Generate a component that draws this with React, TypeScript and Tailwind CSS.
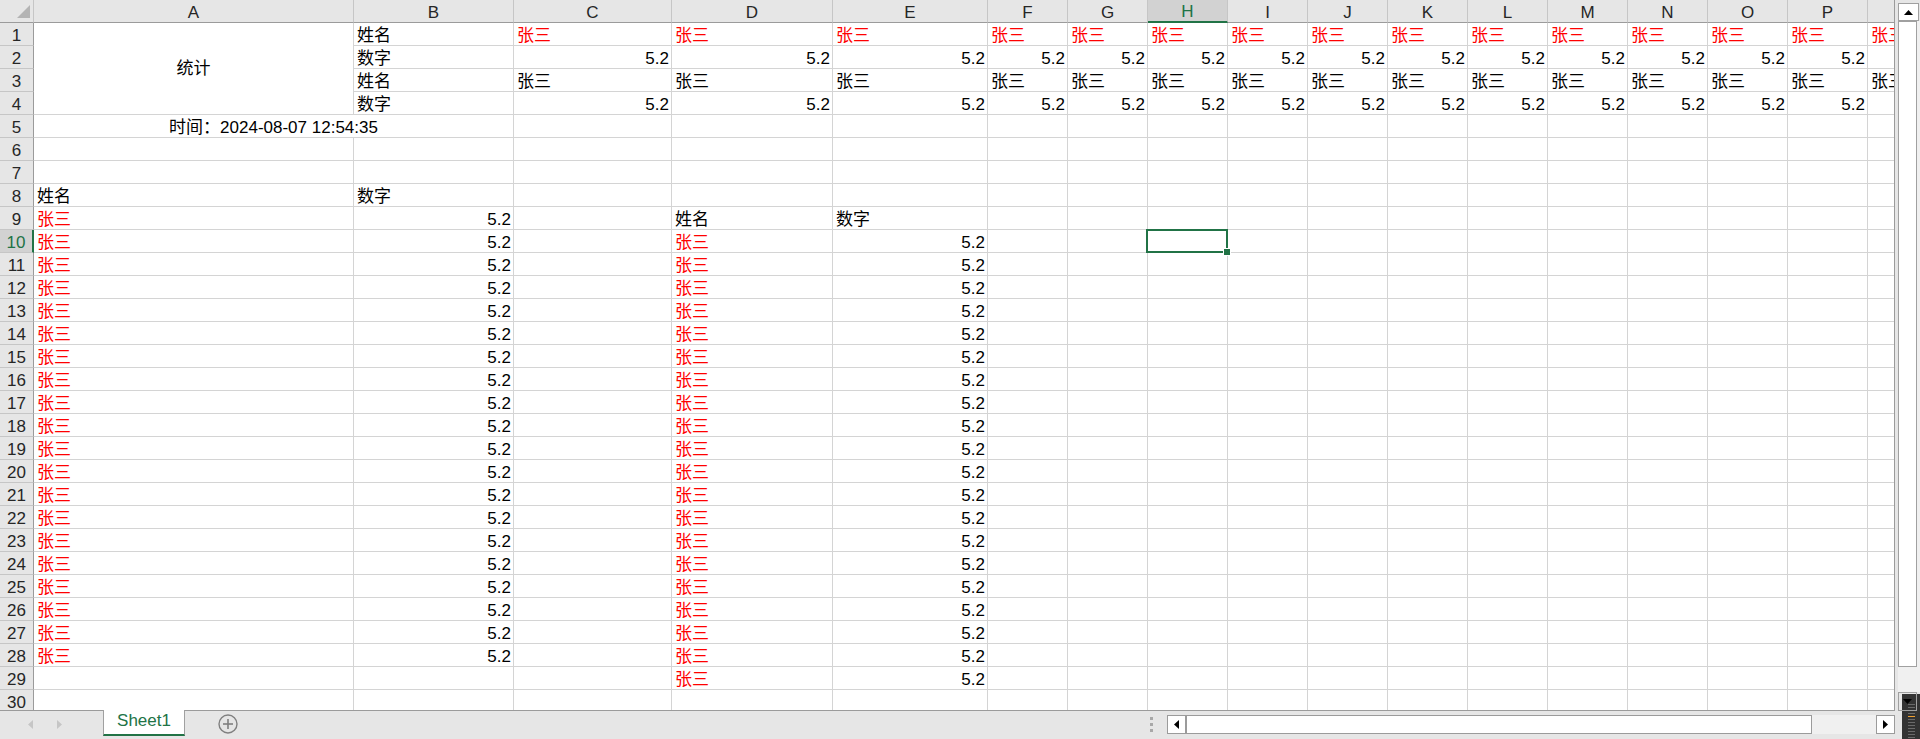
import React from 'react';

const COLS = ['A', 'B', 'C', 'D', 'E', 'F', 'G', 'H', 'I', 'J', 'K', 'L', 'M', 'N', 'O', 'P', 'Q'];
const ROWS = Array.from({ length: 30 }, (_, i) => i + 1);

type Cell = { t: string; red?: boolean; al: 'l' | 'r' | 'c' };

function content(r: number, c: number): Cell | null {
  if (c === 2 && r >= 1 && r <= 4) return { t: r % 2 === 1 ? '姓名' : '数字', al: 'l' };
  if (c >= 3 && r >= 1 && r <= 4) {
    if (r === 1) return { t: '张三', red: true, al: 'l' };
    if (r === 3) return { t: '张三', al: 'l' };
    return { t: '5.2', al: 'r' };
  }
  if (r === 8 && c === 1) return { t: '姓名', al: 'l' };
  if (r === 8 && c === 2) return { t: '数字', al: 'l' };
  if (r >= 9 && r <= 28 && c === 1) return { t: '张三', red: true, al: 'l' };
  if (r >= 9 && r <= 28 && c === 2) return { t: '5.2', al: 'r' };
  if (r === 9 && c === 4) return { t: '姓名', al: 'l' };
  if (r === 9 && c === 5) return { t: '数字', al: 'l' };
  if (r >= 10 && r <= 29 && c === 4) return { t: '张三', red: true, al: 'l' };
  if (r >= 10 && r <= 29 && c === 5) return { t: '5.2', al: 'r' };
  return null;
}

function DataCell({ r, c }: { r: number; c: number }) {
  const cell = content(r, c);
  const selected = r === 10 && c === 8;
  if (selected) {
    return (
      <div className="relative z-10 border-r border-b border-[#d4d4d4] bg-white">
        <div className="absolute left-[-2px] top-[-1px] right-[-1px] bottom-[-1px] border-2 border-[#217346]" />
        <div className="absolute right-[-4px] bottom-[-4px] h-[6px] w-[6px] border border-white bg-[#217346] box-content" />
      </div>
    );
  }
  const al = cell?.al ?? 'l';
  return (
    <div
      className={`flex items-end overflow-hidden whitespace-nowrap border-r border-b border-[#d4d4d4] bg-white pl-[3px] pr-[2px] leading-[18px] ${
        al === 'r' ? 'justify-end' : al === 'c' ? 'justify-center' : 'justify-start'
      } ${cell?.red ? 'text-[#ff0000]' : 'text-black'}`}
    >
      {cell ? cell.t : ''}
    </div>
  );
}

function Grid() {
  const items: React.ReactNode[] = [];
  // header row
  items.push(
    <div key="corner" className="relative border-r border-b border-r-[#c6c6c6] border-b-[#9b9b9b] bg-[#e6e6e6]">
      <svg className="absolute left-0 top-0" width="33" height="22" viewBox="0 0 33 22">
        <polygon points="30,5 30,18 17,18" fill="#b4b4b4" />
      </svg>
    </div>
  );
  COLS.forEach((L, i) => {
    const sel = L === 'H';
    items.push(
      <div
        key={'h' + L}
        className={`flex items-end justify-center border-r border-b leading-[18px] ${
          sel
            ? 'border-b-2 border-r-[#c6c6c6] border-b-[#217346] bg-[#d2d2d2] text-[#217346]'
            : 'border-r-[#c6c6c6] border-b-[#9b9b9b] bg-[#e6e6e6] text-[#262626]'
        }`}
      >
        <span className={sel ? 'pb-0' : 'pb-0'}>{L}</span>
        {i < 0 ? null : null}
      </div>
    );
  });
  ROWS.forEach((r) => {
    const sel = r === 10;
    items.push(
      <div
        key={'r' + r}
        className={`flex items-end justify-center border-b leading-[18px] ${
          sel
            ? 'border-r-2 border-r-[#217346] border-b-[#c6c6c6] bg-[#d2d2d2] text-[#217346]'
            : 'border-r border-r-[#9b9b9b] border-b-[#c6c6c6] bg-[#e6e6e6] text-[#262626]'
        }`}
      >
        {r}
      </div>
    );
    for (let c = 1; c <= 17; c++) {
      if (c === 1 && r === 1) {
        items.push(
          <div key="m1" className="row-span-4 flex items-center justify-center border-r border-b border-[#d4d4d4] bg-white leading-[18px] text-black">
            统计
          </div>
        );
        continue;
      }
      if (c === 1 && r >= 2 && r <= 4) continue;
      if (c === 1 && r === 5) {
        items.push(
          <div key="m5" className="col-span-2 flex items-end justify-center whitespace-nowrap border-r border-b border-[#d4d4d4] bg-white leading-[18px] text-black">
            时间：2024-08-07 12:54:35
          </div>
        );
        continue;
      }
      if (c === 2 && r === 5) continue;
      items.push(<DataCell key={r + '-' + c} r={r} c={c} />);
    }
  });
  return (
    <div className="grid w-[1948px] grid-cols-[34px_320px_160px_158px_161px_155px_repeat(12,80px)] grid-rows-[23px_repeat(30,23px)] text-[17px]">
      {items}
    </div>
  );
}

function TriLeft({ color = '#000' }: { color?: string }) {
  return (
    <svg width="5" height="9" viewBox="0 0 5 9">
      <polygon points="5,0 5,9 0,4.5" fill={color} />
    </svg>
  );
}
function TriRight({ color = '#000' }: { color?: string }) {
  return (
    <svg width="5" height="9" viewBox="0 0 5 9">
      <polygon points="0,0 0,9 5,4.5" fill={color} />
    </svg>
  );
}

function VScroll() {
  return (
    <div className="flex h-[711px] w-[25px] flex-col bg-[#e6e6e6] pl-[3px] pt-[3px]">
      <div className="flex h-[18px] w-[21px] items-center justify-center border border-[#a0a0a0] bg-white">
        <svg width="9" height="5" viewBox="0 0 9 5">
          <polygon points="0,5 9,5 4.5,0" fill="#000" />
        </svg>
      </div>
      <div className="flex w-[22px] flex-1 flex-col bg-[#f0f0f0]">
        <div className="h-[646px] w-[19px] border border-[#a0a0a0] bg-white" />
      </div>
      <div className="relative z-20 flex h-[19px] w-[19px] items-center justify-center border border-[#a0a0a0]">
        <svg width="9" height="5" viewBox="0 0 9 5">
          <polygon points="0,0 9,0 4.5,5" fill="#000" />
        </svg>
      </div>
    </div>
  );
}

function TabBar() {
  return (
    <div className="flex h-[28px] items-start bg-[#e6e6e6]">
      <div className="flex h-[26px] w-[103px] items-center gap-[24px] pl-[28px]">
        <TriLeft color="#c6c6c6" />
        <TriRight color="#c6c6c6" />
      </div>
      <div className="-mt-[1px] flex h-[26px] w-[82px] items-center justify-center border-x border-x-[#a0a0a0] border-b-2 border-b-[#217346] bg-white pb-[3px] text-[17px] leading-[18px] text-[#217346]">
        Sheet1
      </div>
      <div className="ml-[33px] flex h-[26px] items-center">
        <svg width="20" height="20" viewBox="0 0 20 20">
          <circle cx="10" cy="10" r="9" fill="none" stroke="#808080" strokeWidth="1.4" />
          <line x1="10" y1="5" x2="10" y2="15" stroke="#808080" strokeWidth="1.6" />
          <line x1="5" y1="10" x2="15" y2="10" stroke="#808080" strokeWidth="1.6" />
        </svg>
      </div>
      <div className="flex-1" />
      <div className="flex h-[26px] w-[17px] flex-col justify-center gap-[3px] pt-[1px]">
        <div className="h-[3px] w-[3px] bg-[#a8a8a8]" />
        <div className="h-[3px] w-[3px] bg-[#a8a8a8]" />
        <div className="h-[3px] w-[3px] bg-[#a8a8a8]" />
      </div>
      <div className="mt-[4px] flex h-[19px] w-[728px]">
        <div className="flex w-[19px] items-center justify-center border border-[#9b9b9b] bg-white">
          <TriLeft />
        </div>
        <div className="w-[626px] border border-[#9b9b9b] bg-white" />
        <div className="flex-1 bg-[#f0f0f0]" />
        <div className="flex w-[19px] items-center justify-center border border-[#9b9b9b] bg-white">
          <TriRight />
        </div>
      </div>
      <div className="w-[25px]" />
    </div>
  );
}

function DarkWidget() {
  const dashes = [];
  for (let y = 10; y < 45; y += 3) dashes.push(y);
  return (
    <div className="absolute right-0 bottom-0 z-10 h-[45px] w-[18px] bg-[#333333]">
      <svg width="18" height="45" viewBox="0 0 18 45">
        {dashes.map((y) => (
          <line key={y} x1="6" y1={y + 0.5} x2="13" y2={y + 0.5} stroke={y === 22 ? '#f0a030' : '#6a6a6a'} strokeWidth="1" />
        ))}
      </svg>
    </div>
  );
}

export default function App() {
  return (
    <div className="relative h-[739px] w-[1920px] overflow-hidden bg-[#e6e6e6] font-['Liberation_Sans','Noto_Sans_CJK_SC',sans-serif] text-[17px]">
      <div className="flex h-[711px]">
        <div className="h-[711px] w-[1895px] overflow-hidden border-r border-b border-[#9b9b9b] bg-white">
          <Grid />
        </div>
        <VScroll />
      </div>
      <TabBar />
      <DarkWidget />
    </div>
  );
}
